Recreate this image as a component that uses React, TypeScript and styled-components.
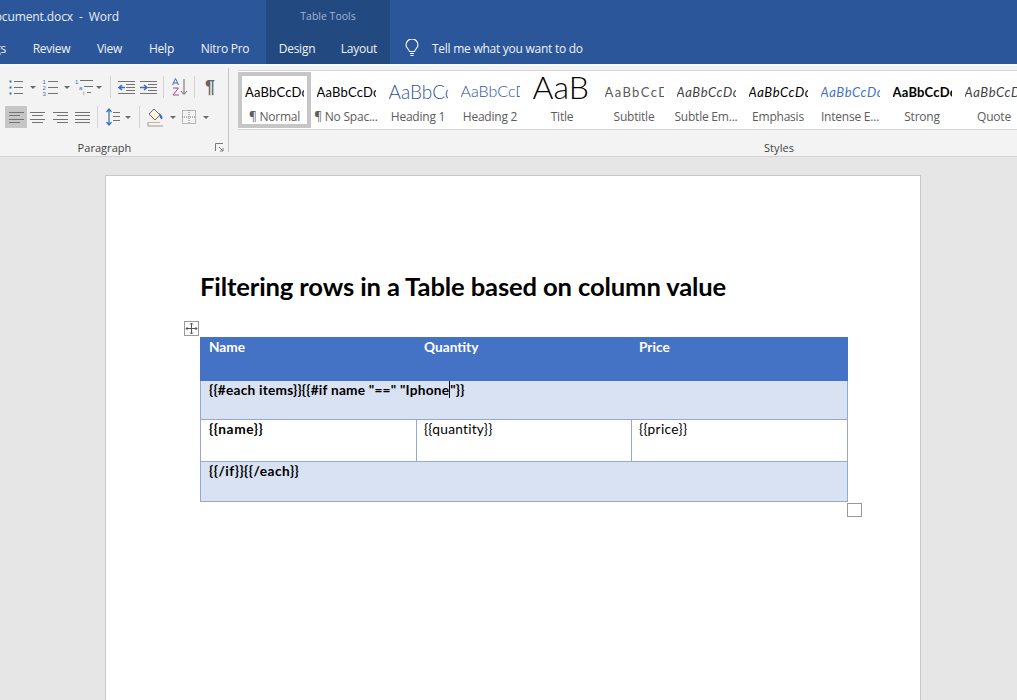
import React from "react";
import styled, { createGlobalStyle } from "styled-components";

const Global = createGlobalStyle`
  html, body { margin: 0; padding: 0; background: #e6e6e6; }
  #root { width: 1017px; height: 700px; overflow: hidden; }
`;
const ui = `"Open Sans", "Noto Sans", sans-serif`;
const doc = `Lato, "Liberation Sans", sans-serif`;

const Window = styled.div`
  width: 1017px; height: 700px; overflow: hidden; background: #e6e6e6;
  display: flex; flex-direction: column; font-family: ${ui};
`;
const Chrome = styled.header`
  height: 64px; flex: none; background: #2b579a; display: flex; flex-direction: column;
`;
const TitleRow = styled.div`display: flex; height: 32px; flex: none;`;
const TitleClip = styled.div`
  width: 266px; overflow: hidden; display: flex; justify-content: flex-end; align-items: center;
`;
const TitleText = styled.span`
  font-size: 12px; color: #e8edf5; white-space: pre; padding-right: 147px; flex: none; letter-spacing: -0.1px;
`;
const ContextHead = styled.div`
  width: 124px; background: #234a80; color: #9db4d6; font-size: 10.5px;
  display: flex; align-items: center; justify-content: center;
`;
const TabRow = styled.nav`display: flex; height: 32px; flex: none; align-items: center;`;
const Tab = styled.span<{ $w: number; $ctx?: boolean }>`
  width: ${(p) => p.$w}px; height: 100%; flex: none; display: flex; align-items: center; justify-content: center;
  font-size: 12px; letter-spacing: -0.25px; color: #eef2f8; background: ${(p) => (p.$ctx ? "#234a80" : "transparent")};
`;
const ClippedTab = styled(Tab)`
  overflow: hidden; justify-content: flex-end; padding-right: 12px; box-sizing: border-box;
  & > span { flex: none; }
`;
const TellMe = styled.div`
  display: flex; align-items: center; gap: 13px; margin-left: 15px; color: #eef2f8; font-size: 12px; letter-spacing: -0.26px;
`;

const Ribbon = styled.section`
  height: 93px; flex: none; background: #f3f3f3; border-bottom: 1px solid #d2d2d2; box-sizing: border-box;
  display: flex; overflow: hidden; border-top: 2px solid #f8f9fa;
`;
const ParagraphGroup = styled.div`
  width: 229px; flex: none; box-sizing: border-box; display: flex; flex-direction: column; position: relative;
  &::after { content: ""; position: absolute; right: 0; top: 2px; bottom: 4px; width: 1px; background: #c6c6c6; }
`;
const ToolRow = styled.div<{ $top: number }>`
  display: flex; align-items: center; height: 22px; margin-top: ${(p) => p.$top}px;
`;
const Tool = styled.span<{ $w: number; $ml?: number; $on?: boolean }>`
  flex: none; width: ${(p) => p.$w}px; height: 22px; margin-left: ${(p) => p.$ml ?? 0}px;
  display: flex; align-items: center; justify-content: center;
  background: ${(p) => (p.$on ? "#c6c6c6" : "transparent")};
`;
const Sep = styled.i<{ $ml: number }>`
  flex: none; width: 1px; height: 22px; background: #d4d4d4; margin-left: ${(p) => p.$ml}px;
`;
const Pilcrow = styled.span`font-family: "Liberation Sans", sans-serif; font-size: 18px; font-weight: 700; color: #666;`;
const GroupLabel = styled.div<{ $pr?: number }>`
  margin-top: auto; height: 16px; padding-right: ${(p) => p.$pr ?? 0}px; box-sizing: border-box;
  text-align: center; font-size: 11px; line-height: 16px; color: #444; letter-spacing: 0.05px;
`;
const Launcher = styled.span`position: absolute; right: 5px; bottom: 4px; width: 9px; height: 9px; display: flex;`;
const StylesGroup = styled.div`width: 1100px; flex: none; display: flex; flex-direction: column;`;
const Gallery = styled.div`
  margin: 4px 0 0 9px; height: 60px; box-sizing: border-box; background: #fff;
  border-top: 1px solid #d6d6d6; border-bottom: 1px solid #d6d6d6; display: flex; padding-top: 1px;
`;
const StyleItem = styled.div<{ $on?: boolean }>`
  width: 72px; height: 56px; flex: none; box-sizing: border-box; display: flex; flex-direction: column; align-items: center;
  border: 4px solid ${(p) => (p.$on ? "#c6c6c6" : "transparent")};
  ${(p) => p.$on && "width: 73px; margin-right: -1px;"}
`;
const Preview = styled.div`
  width: 59px; height: 31px; overflow: hidden; display: flex; align-items: center; white-space: nowrap; flex: none;
`;
const PreviewText = styled.span<{ $size: number; $color: string; $i?: boolean; $b?: boolean; $light?: boolean; $sp?: number; $dy?: number }>`
  font-family: ${doc}; font-size: ${(p) => p.$size}px; color: ${(p) => p.$color};
  font-style: ${(p) => (p.$i ? "italic" : "normal")}; font-weight: ${(p) => (p.$b ? 700 : p.$light ? 300 : 400)};
  letter-spacing: ${(p) => p.$sp ?? 0}px; line-height: 1; transform: translateY(${(p) => p.$dy ?? 0}px);
`;
const StyleName = styled.div`
  font-size: 12px; line-height: 16px; color: #5c5c5c; white-space: nowrap; letter-spacing: -0.22px; margin-top: 2px;
`;

const Canvas = styled.main`flex: 1; display: flex; align-items: flex-start; padding: 18px 0 0 105px; overflow: hidden;`;
const Page = styled.article`
  width: 816px; height: 700px; box-sizing: border-box; background: #fff; border: 1px solid #c8c8c8; flex: none;
  padding: 94px 0 0 94px; font-family: ${doc};
`;
const Heading = styled.h1`
  margin: 0; font-size: 25.6px; line-height: 32px; font-weight: 700; color: #000; letter-spacing: -0.13px; font-family: ${doc};
`;
const TableWrap = styled.div`position: relative; width: 647px; margin-top: 35px;`;
const MoveHandle = styled.span`
  position: absolute; left: -16px; top: -16px; width: 15px; height: 15px; box-sizing: border-box;
  border: 1px solid #9a9a9a; background: #fff; display: flex; align-items: center; justify-content: center;
`;
const ResizeHandle = styled.span`
  position: absolute; right: -15px; bottom: -15px; width: 15px; height: 14px; box-sizing: border-box; border: 1px solid #9a9a9a; background: #fff;
`;
const Table = styled.table`
  width: 647px; border-collapse: collapse; table-layout: fixed; font-size: 13.7px; color: #000;
`;
const Row = styled.tr<{ $h: number }>`height: ${(p) => p.$h}px;`;
const Cell = styled.td<{ $kind: "head" | "band" | "plain"; $b?: boolean; $sp?: number }>`
  box-sizing: border-box; vertical-align: top; padding: 0 8px; line-height: 17px;
  border: 1px solid ${(p) => (p.$kind === "head" ? "#4472c4" : "#95a9cf")};
  background: ${(p) => (p.$kind === "head" ? "#4472c4" : p.$kind === "band" ? "#d9e2f3" : "#fff")};
  color: ${(p) => (p.$kind === "head" ? "#fff" : "#000")};
  font-weight: ${(p) => (p.$b ? 700 : 400)};
  letter-spacing: ${(p) => p.$sp ?? 0}px;
  & + & { padding-left: 7px; }
`;
const Caret = styled.span`display: inline-block; width: 0; height: 17px; border-left: 1px solid #000; vertical-align: top;`;

const s = { fill: "none", stroke: "#737373", strokeWidth: 1 } as const;

const Arrow = () => (
  <svg width="6" height="3" viewBox="0 0 6 3"><path d="M0 0h6L3 3z" fill="#6a6a6a" /></svg>
);
const Lines = ({ w = 15, ys, xs = [] as [number, number][] }: { w?: number; ys: number[]; xs?: [number, number][] }) => (
  <svg width={w} height="15" viewBox={`0 0 ${w} 15`}>
    {ys.map((y, i) => (
      <path key={y} d={`M${xs[i]?.[0] ?? 0} ${y + 0.5}H${xs[i]?.[1] ?? w}`} {...s} />
    ))}
  </svg>
);
const Bullets = () => (
  <svg width="14" height="15" viewBox="0 0 14 15">
    {[1, 7, 13].map((y) => (
      <g key={y}>
        <rect x="0.500" y={y - 0.5} width="2" height="2" fill="#3f6ba8" />
        <path d={`M5 ${y + 0.5}H14`} {...s} />
      </g>
    ))}
  </svg>
);
const Numbers = () => (
  <svg width="16" height="17" viewBox="0 0 16 17">
    {["1", "2", "3"].map((n, i) => (
      <g key={n}>
        <text x="0.500" y={5 + i * 6} fontSize="6" fontFamily="Liberation Sans, sans-serif" fill="#3f6ba8">{n}</text>
        <path d={`M6 ${2.5 + i * 6}H16`} {...s} />
      </g>
    ))}
  </svg>
);
const Multi = () => (
  <svg width="18" height="17" viewBox="0 0 18 17">
    <text x="0" y="5" fontSize="6" fontFamily="Liberation Sans, sans-serif" fill="#3f6ba8">1</text>
    <path d="M5 1.500H18" {...s} />
    <text x="4" y="10.500" fontSize="6" fontFamily="Liberation Sans, sans-serif" fill="#3f6ba8">a</text>
    <path d="M9 7.500H18" {...s} />
    <text x="8" y="16" fontSize="6" fontFamily="Liberation Sans, sans-serif" fill="#6a6a6a">i</text>
    <path d="M12 13.500H16" {...s} />
  </svg>
);
const Indent = ({ flip }: { flip?: boolean }) => (
  <svg width="17" height="15" viewBox="0 0 17 15">
    {[1, 4, 7, 10, 13].map((y) => (
      <path key={y} d={`M${y === 1 || y === 13 ? 0 : 8} ${y + 0.5}H17`} {...s} />
    ))}
    <path d={flip ? "M0 7.500H6M4 5l3 2.500L4 10" : "M1 7.500H7M4 5L1 7.500 4 10"} fill="none" stroke="#3a6fb5" strokeWidth="1.6" />
  </svg>
);
const Sort = () => (
  <svg width="16" height="18" viewBox="0 0 16 18">
    <path d="M0.500 7L3.500 0.500 6.500 7M1.500 5H5.500" fill="none" stroke="#3a6fb5" />
    <path d="M1 10H6.500L1 17H7" fill="none" stroke="#a8489a" />
    <path d="M12 1V16M9 13l3 3.500 3-3.500" fill="none" stroke="#6a6a6a" />
  </svg>
);
const LineSpacing = () => (
  <svg width="14" height="18" viewBox="0 0 14 18">
    <path d="M3 1v16M0.500 4L3 1l2.500 3M0.500 14L3 17l2.500-3" fill="none" stroke="#3a6fb5" strokeWidth="1.2" />
    {[4, 8, 12].map((y) => <path key={y} d={`M7 ${y + 0.5}H14`} {...s} />)}
  </svg>
);
const Shading = () => (
  <svg width="17" height="19" viewBox="0 0 17 19">
    <path d="M7 1l6 6-5 5-6-6z" fill="#fdf6e3" stroke="#6a6a6a" />
    <path d="M12 5c2 1 3.500 3 3.500 5 0 1-1 1.500-1.500 1-1-1-1.500-3-2-6z" fill="#3a6fb5" />
    <path d="M1 14v4h15" fill="none" stroke="#9a9a9a" />
    <path d="M1 14.500h12" stroke="#c9b98a" />
  </svg>
);
const Borders = () => (
  <svg width="14" height="14" viewBox="0 0 14 14">
    <rect x="0.500" y="0.500" width="13" height="13" fill="none" stroke="#7a7a7a" strokeDasharray="1 1" />
    <path d="M7 0v14M0 7h14" stroke="#7a7a7a" strokeDasharray="1 1" />
  </svg>
);
const Bulb = () => (
  <svg width="14" height="18" viewBox="0 0 14 18">
    <path d="M4.500 12.500C4 10 1 9 1 6a6 6 0 0 1 12 0c0 3-3 4-3.500 6.500z" fill="none" stroke="#fff" strokeWidth="1.1" />
    <path d="M5 14.500h4M5.500 16.500h3" stroke="#fff" strokeWidth="1.1" />
  </svg>
);
const Move = () => (
  <svg width="13" height="13" viewBox="0 0 13 13">
    <path d="M6.500 1v11M1 6.500h11M5 2.500L6.500 1 8 2.500M5 10.500L6.500 12 8 10.500M2.500 5L1 6.500 2.500 8M10.500 5L12 6.500 10.500 8" fill="none" stroke="#555" />
  </svg>
);
const LauncherIcon = () => (
  <svg width="9" height="9" viewBox="0 0 9 9">
    <path d="M0.500 8V0.500H8M4 4l4 4M8 5v3H5" fill="none" stroke="#7a7a7a" />
  </svg>
);

const previews: { name: string; text: string; size: number; color: string; i?: boolean; b?: boolean; light?: boolean; sp?: number; dy?: number; on?: boolean }[] = [
  { name: "¶ Normal", text: "AaBbCcDc", size: 13, color: "#000", on: true, sp: 0.2, dy: 1 },
  { name: "¶ No Spac...", text: "AaBbCcDc", size: 13, color: "#000", sp: 0.2, dy: 1 },
  { name: "Heading 1", text: "AaBbCcD", size: 19, color: "#2f5496", light: true, dy: 0 },
  { name: "Heading 2", text: "AaBbCcD", size: 16, color: "#2f5496", light: true, dy: -1 },
  { name: "Title", text: "AaB", size: 32, color: "#000", light: true, dy: -5 },
  { name: "Subtitle", text: "AaBbCcD", size: 13, color: "#5a5a5a", sp: 1.4, dy: 1 },
  { name: "Subtle Em...", text: "AaBbCcDc", size: 13, color: "#404040", i: true, sp: 0.6, dy: 1 },
  { name: "Emphasis", text: "AaBbCcDc", size: 13, color: "#000", i: true, sp: 0.6, dy: 1 },
  { name: "Intense E...", text: "AaBbCcDc", size: 13, color: "#4472c4", i: true, sp: 0.6, dy: 1 },
  { name: "Strong", text: "AaBbCcDc", size: 13, color: "#000", b: true, sp: 0.2, dy: 1 },
  { name: "Quote", text: "AaBbCcDc", size: 13, color: "#404040", i: true, sp: 0.6, dy: 1 },
];

export default function App() {
  return (
    <>
      <Global />
      <Window>
        <Chrome>
          <TitleRow>
            <TitleClip>
              <TitleText>Document.docx  -  Word</TitleText>
            </TitleClip>
            <ContextHead>Table Tools</ContextHead>
          </TitleRow>
          <TabRow>
            <ClippedTab $w={18}><span>Mailings</span></ClippedTab>
            <Tab $w={67}>Review</Tab>
            <Tab $w={49}>View</Tab>
            <Tab $w={55}>Help</Tab>
            <Tab $w={72}>Nitro Pro</Tab>
            <Tab $w={5} />
            <Tab $w={62} $ctx>Design</Tab>
            <Tab $w={62} $ctx>Layout</Tab>
            <TellMe>
              <Bulb />
              <span>Tell me what you want to do</span>
            </TellMe>
          </TabRow>
        </Chrome>
        <Ribbon>
          <ParagraphGroup>
            <ToolRow $top={10}>
              <Tool $w={14} $ml={9}><Bullets /></Tool>
              <Tool $w={7} $ml={6}><Arrow /></Tool>
              <Tool $w={16} $ml={6}><Numbers /></Tool>
              <Tool $w={7} $ml={5}><Arrow /></Tool>
              <Tool $w={18} $ml={5}><Multi /></Tool>
              <Tool $w={7} $ml={2}><Arrow /></Tool>
              <Sep $ml={8} />
              <Tool $w={17} $ml={7}><Indent /></Tool>
              <Tool $w={17} $ml={5}><Indent flip /></Tool>
              <Sep $ml={6} />
              <Tool $w={16} $ml={8}><Sort /></Tool>
              <Sep $ml={6} />
              <Tool $w={12} $ml={9}><Pilcrow>¶</Pilcrow></Tool>
            </ToolRow>
            <ToolRow $top={8}>
              <Tool $w={22} $ml={5} $on><Lines ys={[2, 5, 9, 12]} xs={[[0, 15], [0, 11], [0, 15], [0, 11]]} /></Tool>
              <Tool $w={15} $ml={3}><Lines ys={[2, 5, 9, 12]} xs={[[0, 15], [2, 13], [0, 15], [2, 13]]} /></Tool>
              <Tool $w={15} $ml={8}><Lines ys={[2, 5, 9, 12]} xs={[[0, 15], [4, 15], [0, 15], [4, 15]]} /></Tool>
              <Tool $w={15} $ml={7}><Lines ys={[2, 5, 9, 12]} /></Tool>
              <Sep $ml={7} />
              <Tool $w={14} $ml={8}><LineSpacing /></Tool>
              <Tool $w={7} $ml={4}><Arrow /></Tool>
              <Sep $ml={8} />
              <Tool $w={17} $ml={7}><Shading /></Tool>
              <Tool $w={7} $ml={5}><Arrow /></Tool>
              <Tool $w={14} $ml={6}><Borders /></Tool>
              <Tool $w={7} $ml={6}><Arrow /></Tool>
            </ToolRow>
            <GroupLabel $pr={20}>Paragraph</GroupLabel>
            <Launcher><LauncherIcon /></Launcher>
          </ParagraphGroup>
          <StylesGroup>
            <Gallery>
              {previews.map((p) => (
                <StyleItem key={p.name} $on={p.on}>
                  <Preview>
                    <PreviewText $size={p.size} $color={p.color} $i={p.i} $b={p.b} $light={p.light} $sp={p.sp} $dy={p.dy}>
                      {p.text}
                    </PreviewText>
                  </Preview>
                  <StyleName>{p.name}</StyleName>
                </StyleItem>
              ))}
            </Gallery>
            <GroupLabel>Styles</GroupLabel>
          </StylesGroup>
        </Ribbon>
        <Canvas>
          <Page>
            <Heading>Filtering rows in a Table based on column value</Heading>
            <TableWrap>
              <MoveHandle><Move /></MoveHandle>
              <Table>
                <colgroup>
                  <col style={{ width: 216 }} />
                  <col style={{ width: 215 }} />
                  <col style={{ width: 216 }} />
                </colgroup>
                <tbody>
                  <Row $h={43}>
                    <Cell $kind="head" $b>Name</Cell>
                    <Cell $kind="head" $b>Quantity</Cell>
                    <Cell $kind="head" $b>Price</Cell>
                  </Row>
                  <Row $h={39}>
                    <Cell $kind="band" $b $sp={0.22} colSpan={3}>{'{{#each items}}{{#if name "==" "Iphone'}<Caret />{'"}}'}</Cell>
                  </Row>
                  <Row $h={42}>
                    <Cell $kind="plain" $b $sp={0.6}>{"{{name}}"}</Cell>
                    <Cell $kind="plain" $sp={0.25}>{"{{quantity}}"}</Cell>
                    <Cell $kind="plain" $sp={0.33}>{"{{price}}"}</Cell>
                  </Row>
                  <Row $h={40}>
                    <Cell $kind="band" $b $sp={0.5} colSpan={3}>{"{{/if}}{{/each}}"}</Cell>
                  </Row>
                </tbody>
              </Table>
              <ResizeHandle />
            </TableWrap>
          </Page>
        </Canvas>
      </Window>
    </>
  );
}
